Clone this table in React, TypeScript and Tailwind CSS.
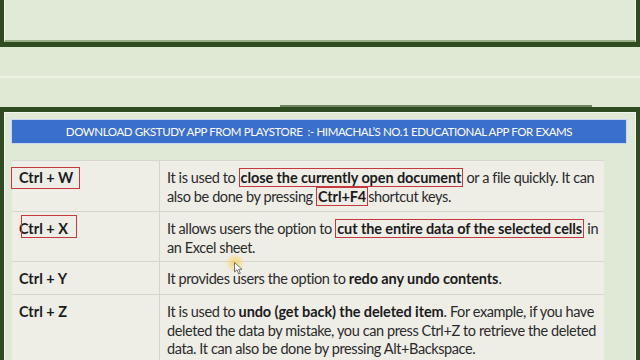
import React from 'react';

const font = { fontFamily: 'Lato, "Open Sans", sans-serif' };

function RedBox({ children }: { children: React.ReactNode }) {
  return (
    <span className="border-[1.5px] border-[#c5383d] px-[1px] font-bold tracking-[-0.1px] text-[#1b1b1b]">
      {children}
    </span>
  );
}

function Strong({ children }: { children: React.ReactNode }) {
  return <b className="font-bold tracking-[-0.1px] text-[#1b1b1b]">{children}</b>;
}

function Line({ children }: { children: React.ReactNode }) {
  return <div className="whitespace-nowrap">{children}</div>;
}

export default function App() {
  return (
    <div
      className="w-[640px] h-[360px] overflow-hidden bg-[#dfe9d4] flex flex-col relative"
      style={font}
    >
      {/* top frame */}
      <div className="h-[47px] shrink-0 border-x-4 border-b-[5px] border-[#2f4b21] bg-[#e1ead6]">
        <div className="h-full border-x border-b-2 border-x-[#f3f6ee] border-b-[#9aae86]" />
      </div>

      {/* gap between frames */}
      <div className="h-[60px] shrink-0 flex flex-col">
        <div className="h-[29px]" />
        <div className="h-[2px] bg-[#ecf2e4]" />
        <div className="flex-1" />
        <div className="h-[2px] ml-[280px] w-[312px] bg-[#6f8560]" />
      </div>

      {/* lower frame */}
      <div className="flex-1 border-x-4 border-t-[5px] border-[#2f4b21] bg-[#e0e9d5]">
        <div className="h-full border-x border-t border-[#f3f6ee] pl-[6px] pr-[8px] pt-[6px]">
          <div className="h-[25px] bg-[#3b6fcd] border border-[#c7d7f1] flex items-center justify-center text-white text-[11.5px] tracking-[-0.4px]">
            DOWNLOAD GKSTUDY APP FROM PLAYSTORE&nbsp; :- HIMACHAL’S NO.1 EDUCATIONAL APP FOR EXAMS
          </div>

          <div className="mt-[16px] ml-[1px] w-[592px] bg-[#eeeee7] border-t border-[#d6d8cf] text-[14.5px] leading-[18.5px] tracking-[-0.4px] text-[#2a2a2a]">
            {/* Ctrl + W */}
            <div className="flex border-b border-[#d4d5cc] h-[51px]">
              <div className="w-[148px] shrink-0 border-r border-[#d4d5cc] pl-[7px] pt-[8px] relative font-bold tracking-normal text-[#1b1b1b]">
                Ctrl + W
                <span className="absolute left-[-1px] top-[6px] w-[69px] h-[22px] border-[1.5px] border-[#c5383d]" />
              </div>
              <div className="flex-1 pl-[7px] pt-[8px]">
                <Line>
                  It is used to <RedBox>close the currently open document</RedBox> or a file quickly. It can
                </Line>
                <Line>
                  also be done by pressing <RedBox>Ctrl+F4</RedBox>shortcut keys.
                </Line>
              </div>
            </div>

            {/* Ctrl + X */}
            <div className="flex border-b border-[#d4d5cc] h-[50px]">
              <div className="w-[148px] shrink-0 border-r border-[#d4d5cc] pl-[7px] pt-[8px] relative font-bold tracking-normal text-[#1b1b1b]">
                Ctrl + X
                <span className="absolute left-[9px] top-[3px] w-[56px] h-[23px] border-[1.5px] border-[#c5383d]" />
              </div>
              <div className="flex-1 pl-[7px] pt-[8px]">
                <Line>
                  It allows users the option to <RedBox>cut the entire data of the selected cells</RedBox> in
                </Line>
                <Line>an Excel sheet.</Line>
              </div>
            </div>

            {/* Ctrl + Y */}
            <div className="flex border-b border-[#d4d5cc] h-[33px]">
              <div className="w-[148px] shrink-0 border-r border-[#d4d5cc] pl-[7px] pt-[8px] font-bold tracking-normal text-[#1b1b1b]">
                Ctrl + Y
              </div>
              <div className="flex-1 pl-[7px] pt-[8px]">
                <Line>
                  It provides users the option to <Strong>redo any undo contents</Strong>.
                </Line>
              </div>
            </div>

            {/* Ctrl + Z */}
            <div className="flex h-[80px]">
              <div className="w-[148px] shrink-0 border-r border-[#d4d5cc] pl-[7px] pt-[8px] font-bold tracking-normal text-[#1b1b1b]">
                Ctrl + Z
              </div>
              <div className="flex-1 pl-[7px] pt-[8px]">
                <Line>
                  It is used to <Strong>undo (get back) the deleted item</Strong>. For example, if you have
                </Line>
                <Line>deleted the data by mistake, you can press Ctrl+Z to retrieve the deleted</Line>
                <Line>data. It can also be done by pressing Alt+Backspace.</Line>
              </div>
            </div>
          </div>
        </div>
      </div>

      {/* mouse cursor with highlight */}
      <div className="absolute left-[226px] top-[254px] w-[18px] h-[18px] rounded-full bg-[radial-gradient(circle,rgba(250,205,80,0.75)_0%,rgba(250,215,110,0.35)_55%,rgba(250,220,120,0)_75%)]" />
      <svg className="absolute left-[234px] top-[262px]" width="9" height="13" viewBox="0 0 9 13">
        <path d="M0.5 0.5 L0.5 10 L3 7.8 L4.8 12 L6.3 11.3 L4.6 7.3 L8 7.3 Z" fill="#ffffff" stroke="#555" strokeWidth="0.8" />
      </svg>
    </div>
  );
}
